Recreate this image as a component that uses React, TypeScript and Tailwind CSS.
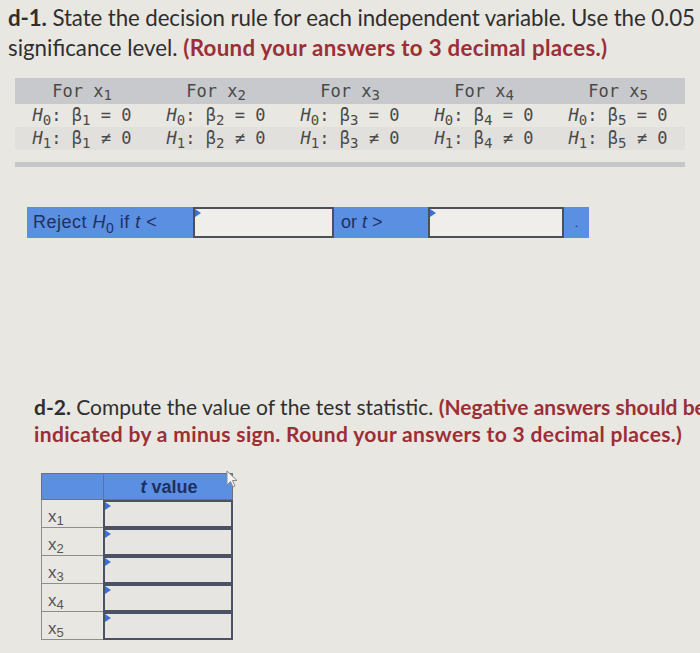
import React from "react";

const mono = { fontFamily: '"DejaVu Sans Mono", "Liberation Mono", monospace' };
const arial = { fontFamily: '"Liberation Sans", Arial, sans-serif' };

function Marker() {
  return (
    <span className="absolute left-0 top-0 w-0 h-0 border-t-[4px] border-b-[4px] border-l-[6px] border-t-transparent border-b-transparent border-l-[#3b6fd4]" />
  );
}

function Sub({ children }: { children: React.ReactNode }) {
  return <span className="text-[14px] relative top-[4px] leading-none">{children}</span>;
}

export default function App() {
  const cols = [1, 2, 3, 4, 5];
  return (
    <div
      className="relative w-[700px] h-[653px] overflow-hidden bg-[#e8e7e2] text-[#2f2f2f]"
      style={{ fontFamily: 'Lato, "Open Sans", sans-serif' }}
    >
      <p className="pl-[8px] pt-[3px] text-[22.3px] leading-[30px] whitespace-nowrap">
        <span className="tracking-[-0.1px]">
          <b>d-1.</b> State the decision rule for each independent variable. Use the 0.05
        </span>
        <br />
        significance level.{" "}
        <b className="text-[#9c2f36] tracking-[0.3px]">(Round your answers to 3 decimal places.)</b>
      </p>

      <div className="ml-[15px] mt-[15px] w-[670px] text-[17px] text-[#4a4a4a]" style={mono}>
        <div className="grid grid-cols-5 h-[26px] bg-[#c8c9cd]">
          {cols.map((n) => (
            <div key={n} className="flex items-center justify-center whitespace-pre leading-none">
              For x<Sub>{n}</Sub>
            </div>
          ))}
        </div>
        <div className="grid grid-cols-5 h-[23px]">
          {cols.map((n) => (
            <div key={n} className="flex items-center justify-center whitespace-pre leading-none">
              <span className="italic">H</span>
              <Sub>0</Sub>
              <span>: β</span>
              <Sub>{n}</Sub>
              <span> = 0</span>
            </div>
          ))}
        </div>
        <div className="grid grid-cols-5 h-[23px] bg-[#e1e0dc]">
          {cols.map((n) => (
            <div key={n} className="flex items-center justify-center whitespace-pre leading-none">
              <span className="italic">H</span>
              <Sub>1</Sub>
              <span>: β</span>
              <Sub>{n}</Sub>
              <span> ≠ 0</span>
            </div>
          ))}
        </div>
        <div className="h-[12px]" />
        <div className="h-[5px] bg-[#c5c6ca]" />
      </div>

      <div className="ml-[27px] mt-[40px] flex h-[31px] text-[18px] text-[#1f3160]" style={arial}>
        <div className="w-[166px] bg-[#5b8fe2] flex items-center pl-[6px] whitespace-pre tracking-[0.5px]">
          Reject <i>H</i>
          <span className="text-[14px] relative top-[5px] leading-none">0</span> if <i>t</i> &lt;
        </div>
        <div className="relative w-[141px] bg-[#efeeea] border-2 border-[#4d5058]">
          <Marker />
        </div>
        <div className="w-[94px] bg-[#5b8fe2] flex items-center pl-[7px] whitespace-pre">
          or <i>t</i> &gt;
        </div>
        <div className="relative w-[136px] bg-[#efeeea] border-2 border-[#4d5058]">
          <Marker />
        </div>
        <div className="w-[25px] bg-[#5b8fe2] flex items-center justify-center text-[12px]">.</div>
      </div>

      <p className="pl-[34px] mt-[155px] text-[21px] leading-[27px] whitespace-nowrap">
        <b>d-2.</b> Compute the value of the test statistic.{" "}
        <b className="text-[#9c2f36]">(Negative answers should be</b>
        <br />
        <b className="text-[#9c2f36] tracking-[0.35px]">indicated by a minus sign. Round your answers to 3 decimal places.)</b>
      </p>

      <div className="ml-[41px] mt-[26px] w-[192px]" style={arial}>
        <div className="grid grid-cols-[62px_130px] h-[27px] bg-[#5b8fe2] border border-[#6a7180]">
          <div className="border-r border-[#6a7180]" />
          <div className="flex items-center justify-center text-[18px] font-semibold text-[#1f2f63] whitespace-pre">
            <i>t</i> value
          </div>
        </div>
        {cols.map((n) => (
          <div key={n} className="grid grid-cols-[62px_130px] h-[28px]">
            <div className="border-l border-b border-[#8e8e8e] flex items-center pl-[6px] pt-[6px] text-[17px] text-[#555] whitespace-pre leading-none">
              <span>x</span>
              <span className="text-[13px] relative top-[4px] leading-none">{n}</span>
            </div>
            <div className="relative border-2 border-[#4b5264] bg-[#e6e5e1]">
              <Marker />
            </div>
          </div>
        ))}
      </div>

      <svg className="absolute left-[226px] top-[470px]" width="16" height="20" viewBox="0 0 16 20">
        <path d="M1 1 L1 15 L4.5 11.5 L7 17 L9 16 L6.5 10.5 L11 10.5 Z" fill="#f4f4f4" stroke="#8a8a8a" strokeWidth="1" />
      </svg>
    </div>
  );
}
